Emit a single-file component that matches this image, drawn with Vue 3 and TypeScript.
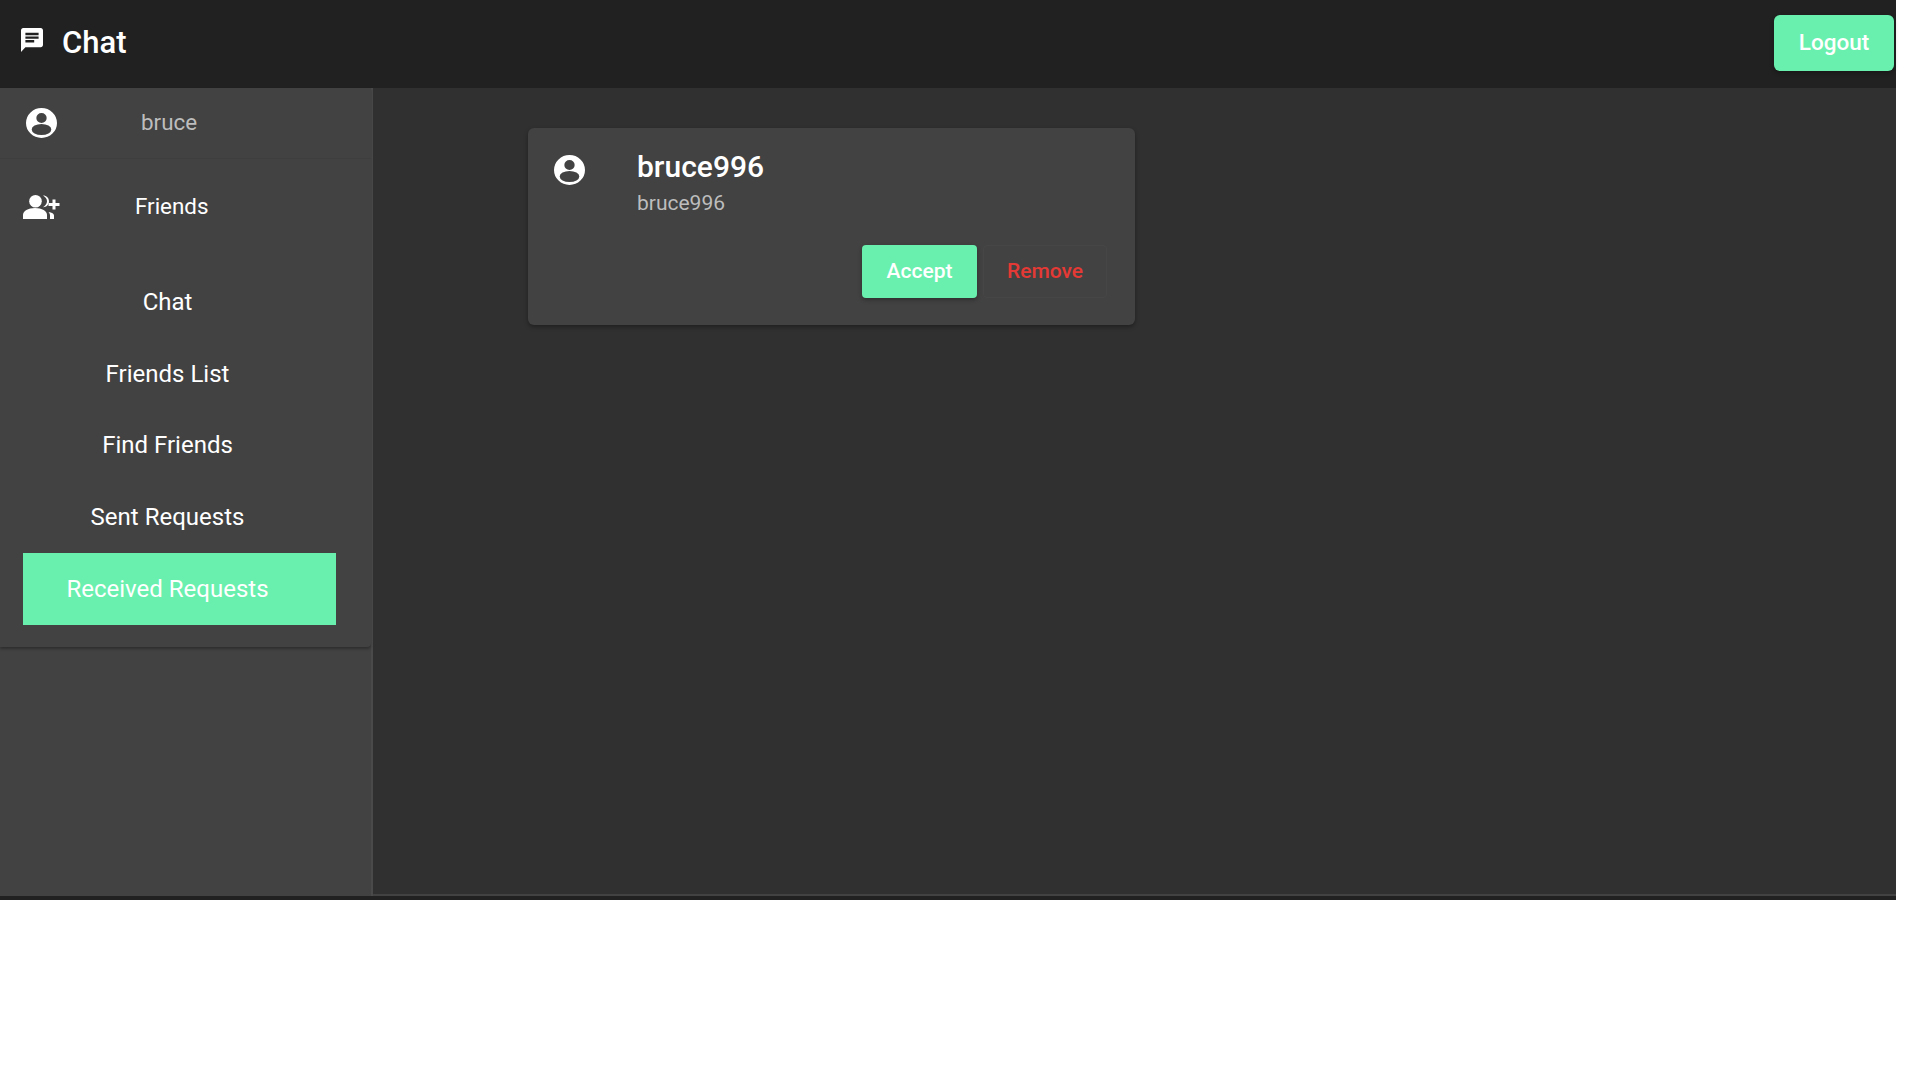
<script setup lang="ts">
const links: string[] = ['Chat', 'Friends List', 'Find Friends', 'Sent Requests']
const acct = 'M15 0a15 15 0 1 0 0 30a15 15 0 1 0 0-30zM15 5a5 5 0 1 1 0 10a5 5 0 1 1 0-10zM15 16a9.5 5.5 0 1 1 0 11a9.5 5.5 0 1 1 0-11z'
</script>

<template>
  <div class="root">
    <header class="bar">
      <svg class="chat-ico" viewBox="2 2 20 20" preserveAspectRatio="none"><path fill="#fff" d="M20 2H4c-1.1 0-2 .9-2 2v18l4-4h14c1.1 0 2-.9 2-2V4c0-1.1-.9-2-2-2zM6 9h12v2H6V9zm8 5H6v-2h8v2zm4-6H6V6h12v2z"/></svg>
      <span class="title">Chat</span>
      <button class="logout">Logout</button>
    </header>
    <div class="body">
      <aside class="side">
        <div class="paper">
          <div class="user">
            <svg class="user-ico" viewBox="0 0 30 30" preserveAspectRatio="none"><path fill="#fff" fill-rule="evenodd" :d="acct"/></svg>
            <span class="user-name">bruce</span>
          </div>
          <div class="friends">
            <svg class="friends-ico" viewBox="0 0 37 24"><g fill="#fff"><circle cx="12.5" cy="6.3" r="6.3"/><path d="M0 24v-4c0-4 5-7 12-7s12 3 12 7v4z"/><path d="M20 .4c2.4 1.4 4 3.4 4 5.9s-1.6 4.5-4 5.9c3.6 0 6-2.6 6-5.9S23.6.4 20 .4z"/><path d="M25.5 17c1 1 1.5 2.2 1.500 3.500V24h4v-3.500c0-1.800-2-3-5.500-3.500z"/><path d="M29.500 4.500h3v3.500h4v3h-4v3.500h-3V11h-4V8h4z"/></g></svg>
            <span class="friends-label">Friends</span>
          </div>
          <nav class="nav">
            <a v-for="l in links" :key="l" class="nav-item">{{ l }}</a>
            <a class="nav-item active">Received Requests</a>
          </nav>
        </div>
      </aside>
      <main class="main">
        <div class="card">
          <div class="card-head">
            <svg class="card-ico" viewBox="0 0 30 30" preserveAspectRatio="none"><path fill="#fff" fill-rule="evenodd" :d="acct"/></svg>
            <div class="card-text">
              <div class="card-name">bruce996</div>
              <div class="card-sub">bruce996</div>
            </div>
          </div>
          <div class="card-actions">
            <button class="accept">Accept</button>
            <button class="remove">Remove</button>
          </div>
        </div>
      </main>
    </div>
  </div>
</template>

<style scoped>
.root { width: 1896px; height: 900px; background: #212121; font-family: Roboto, "Liberation Sans", sans-serif; color: #fff; display: flex; flex-direction: column; }
.bar { height: 88px; flex: none; display: flex; align-items: center; background: #212121; padding-right: 2px; }
.chat-ico { width: 22px; height: 24px; margin-left: 21px; margin-bottom: 8px; flex: none; }
.title { font-size: 31px; font-weight: 500; margin-left: 19px; margin-bottom: 4px; }
.logout { margin-left: auto; margin-bottom: 2px; width: 120px; height: 56px; padding: 0 0 2px; border: 0; border-radius: 6px; background: #69f0ae; color: #fff; font: 500 22.5px Roboto, sans-serif; box-shadow: 0 2px 4px rgba(0,0,0,.3); }
.body { height: 808px; display: flex; flex: none; background: #424242; }
.side { width: 371px; flex: none; background: #424242; border-right: 2px solid #4a4a4a; box-sizing: content-box; }
.paper { height: 559px; background: #424242; border-bottom-right-radius: 4px; box-shadow: 0 2px 3px rgba(0,0,0,.3); }
.user { display: flex; align-items: center; border-bottom: 1px solid #3e3e3e; box-sizing: border-box; height: 71px; }
.user-ico { width: 31px; height: 30px; margin-left: 26px; flex: none; }
.user-name { margin-left: 84px; margin-bottom: 2px; font-size: 22.4px; color: #bdbdbd; }
.friends { height: 65px; margin-top: 15px; display: flex; align-items: center; }
.friends-ico { width: 37px; height: 24px; margin-left: 23px; flex: none; }
.friends-label { margin-left: 75px; margin-bottom: 2px; font-size: 22.4px; }
.nav { margin-top: 27px; display: flex; flex-direction: column; padding-left: 23px; }
.nav-item { width: 313px; height: 72px; margin-bottom: -0.3px; display: flex; align-items: center; justify-content: center; font-size: 24px; padding-right: 24px; box-sizing: border-box; }
.active { background: #69f0ae; }
.main { flex: 1; height: 806px; background: #303030; padding: 40px 0 0 155px; box-sizing: border-box; }
.card { width: 607px; height: 197px; background: #424242; border-radius: 6px; box-shadow: 0 2px 4px rgba(0,0,0,.35); box-sizing: border-box; }
.card-head { display: flex; padding: 0 0 0 26px; }
.card-ico { width: 31px; height: 30px; margin-top: 27px; flex: none; }
.card-text { margin-left: 52px; padding-top: 20px; }
.card-name { font-size: 30px; font-weight: 500; line-height: 38px; }
.card-sub { font-size: 21px; line-height: 26px; margin-top: 4px; color: #bdbdbd; }
.card-actions { display: flex; justify-content: flex-end; padding-right: 28px; margin-top: 29px; }
.accept { width: 115px; height: 53px; padding: 0 0 1px; border: 0; border-radius: 4px; background: #69f0ae; color: #fff; font: 500 21px Roboto, sans-serif; box-shadow: 0 2px 4px rgba(0,0,0,.3); }
.remove { width: 124px; height: 53px; padding: 0 0 1px; margin-left: 6px; border: 1px solid #464646; border-radius: 4px; background: transparent; color: #e53935; font: 500 21px Roboto, sans-serif; }
</style>

<style>
html, body { background: #fff; }
</style>
